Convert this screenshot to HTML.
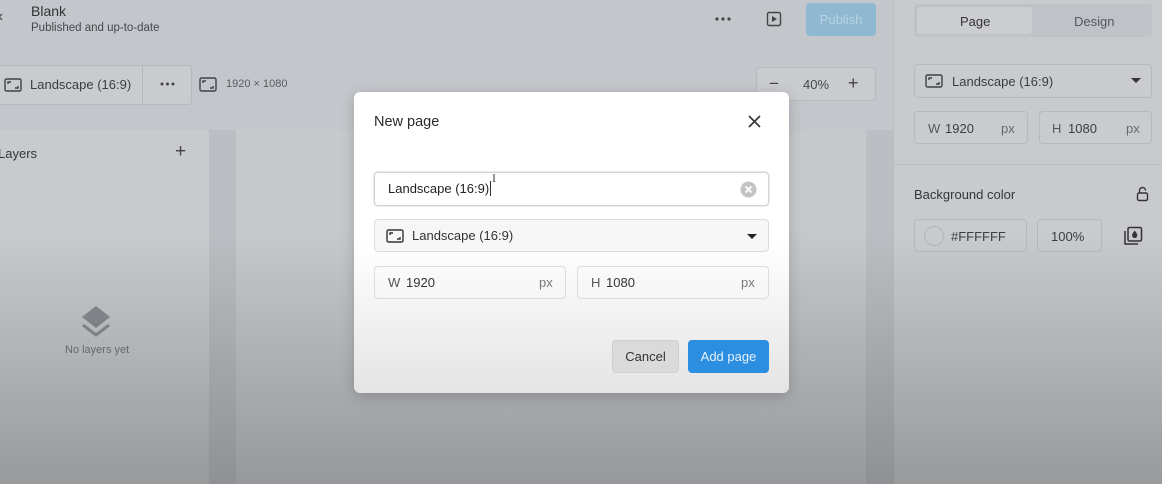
<!DOCTYPE html>
<html><head><meta charset="utf-8"><style>
*{box-sizing:border-box;margin:0;padding:0}
body{width:1162px;height:484px;overflow:hidden;position:relative;background:#c3c6ca;font-family:"Liberation Sans",sans-serif;color:#2e3033}
.a{position:absolute}
.t{font-size:13px;color:#3a3d41}
.box{position:absolute;border:1px solid #b6b9bd;border-radius:4px;background:#c9cbcf}
.shade{position:absolute;left:0;top:0;width:1162px;height:484px;background:linear-gradient(to bottom,rgba(0,0,0,0) 0,rgba(0,0,0,0) 230px,rgba(0,0,0,0.24) 484px);pointer-events:none}
.modal{position:absolute;left:354px;top:92px;width:435px;height:301px;border-radius:6px;background:linear-gradient(to bottom,#fff 0,#fff 150px,#e4e4e4 301px);box-shadow:0 3px 14px rgba(0,0,0,.18)}
.in{position:absolute;border:1px solid #dcdcdc;border-radius:4px;background:#f6f6f6;font-size:13px;color:#333}
</style></head><body>
<div class="a" style="left:0;top:130px;width:209px;height:354px;background:#c8cacd;border-radius:0 4px 0 0"></div>
<div class="a" style="left:209px;top:130px;width:27px;height:354px;background:#bbbec2"></div>
<div class="a" style="left:236px;top:130px;width:630px;height:354px;background:#c6c8cc;border-radius:4px 4px 0 0"></div>
<div class="a" style="left:866px;top:130px;width:27px;height:354px;background:#bbbec2"></div>
<div class="a" style="left:893px;top:0;width:269px;height:484px;background:#c8cacd;border-left:1px solid #b9bcc0"></div>
<div class="a" style="left:893px;top:164px;width:269px;height:1px;background:#b9bcc0"></div>

<div class="a" style="left:-2px;top:8px;font-size:16px;color:#444">‹</div>
<div class="a" style="left:31px;top:3px;font-size:14px;color:#333">Blank</div>
<div class="a" style="left:31px;top:22px;font-size:11.5px;color:#45484c">Published and up-to-date</div>
<svg class="a" style="left:715px;top:17px" width="16" height="4" viewBox="0 0 16 4"><circle cx="2" cy="2" r="1.6" fill="#444"/><circle cx="8" cy="2" r="1.6" fill="#444"/><circle cx="14" cy="2" r="1.6" fill="#444"/></svg>
<svg class="a" style="left:766px;top:11px" width="16" height="16" viewBox="0 0 16 16"><rect x="1.5" y="1.5" width="13" height="13" rx="1.5" fill="none" stroke="#444" stroke-width="1.4"/><path d="M6 5l5 3-5 3z" fill="#444"/></svg>
<div class="a" style="left:806px;top:3px;width:70px;height:33px;border-radius:4px;background:#8fb8d1;color:#b9d3e3;font-size:13px;text-align:center;line-height:33px">Publish</div>

<div class="box" style="left:-4px;top:65px;width:196px;height:40px"></div>
<div class="a" style="left:142px;top:65px;width:1px;height:40px;background:#b6b9bd"></div>
<svg class="a" style="left:4px;top:78px" width="18" height="14" viewBox="0 0 18 14"><rect x="1" y="1" width="16" height="12" rx="1.5" fill="none" stroke="#3f4246" stroke-width="1.4"/><path d="M4 6V4h3M14 8v2h-3" fill="none" stroke="#3f4246" stroke-width="1.4"/></svg>
<div class="a t" style="left:30px;top:77px">Landscape (16:9)</div>
<svg class="a" style="left:160px;top:82px" width="15" height="4" viewBox="0 0 15 4"><circle cx="2" cy="2" r="1.5" fill="#444"/><circle cx="7.5" cy="2" r="1.5" fill="#444"/><circle cx="13" cy="2" r="1.5" fill="#444"/></svg>
<svg class="a" style="left:199px;top:77px" width="18" height="15" viewBox="0 0 18 15"><rect x="1" y="1" width="16" height="13" rx="1.5" fill="none" stroke="#3f4246" stroke-width="1.4"/><path d="M4 6V4h3M14 9v2h-3" fill="none" stroke="#3f4246" stroke-width="1.4"/></svg>
<div class="a" style="left:226px;top:78px;font-size:11px;color:#595c60">1920 × 1080</div>
<div class="box" style="left:756px;top:67px;width:120px;height:34px"></div>
<div class="a" style="left:769px;top:74px;font-size:17px;color:#444">−</div>
<div class="a t" style="left:803px;top:77px;color:#45484c">40%</div>
<div class="a" style="left:848px;top:73px;font-size:18px;color:#444">+</div>

<div class="a t" style="left:-2px;top:146px;color:#33363a">Layers</div>
<div class="a" style="left:175px;top:141px;font-size:19px;color:#444">+</div>
<svg class="a" style="left:80px;top:304px" width="32" height="34" viewBox="0 0 32 34"><path d="M16 2L30 13 16 24 2 13z" fill="#8a8d93"/><path d="M3 21l13 10 13-10" fill="none" stroke="#8a8d93" stroke-width="3"/></svg>
<div class="a" style="left:65px;top:344px;font-size:11px;color:#71747a">No layers yet</div>

<div class="box" style="left:914px;top:4px;width:238px;height:33px;background:#bfc2c6;border-color:#bfc2c6"></div>
<div class="a" style="left:916px;top:6px;width:117px;height:29px;border-radius:4px;background:#cbcdd1;border:1px solid #bcbfc3"></div>
<div class="a t" style="left:960px;top:14px;color:#333">Page</div>
<div class="a t" style="left:1074px;top:14px;color:#55585c">Design</div>
<div class="box" style="left:914px;top:64px;width:238px;height:34px"></div>
<svg class="a" style="left:925px;top:74px" width="18" height="14" viewBox="0 0 18 14"><rect x="1" y="1" width="16" height="12" rx="1.5" fill="none" stroke="#3f4246" stroke-width="1.4"/><path d="M4 6V4h3M14 8v2h-3" fill="none" stroke="#3f4246" stroke-width="1.4"/></svg>
<div class="a t" style="left:952px;top:74px">Landscape (16:9)</div>
<div class="a" style="left:1131px;top:78px;border-left:5px solid transparent;border-right:5px solid transparent;border-top:5px solid #333"></div>
<div class="box" style="left:914px;top:111px;width:114px;height:33px"></div>
<div class="a t" style="left:928px;top:121px;color:#55585c">W</div><div class="a t" style="left:945px;top:121px">1920</div><div class="a t" style="left:1001px;top:121px;color:#66696d">px</div>
<div class="box" style="left:1039px;top:111px;width:113px;height:33px"></div>
<div class="a t" style="left:1052px;top:121px;color:#55585c">H</div><div class="a t" style="left:1068px;top:121px">1080</div><div class="a t" style="left:1126px;top:121px;color:#66696d">px</div>
<div class="a t" style="left:914px;top:187px;color:#33363a">Background color</div>
<svg class="a" style="left:1136px;top:186px" width="13" height="16" viewBox="0 0 13 16"><path d="M3.5 7V4.5a3 3 0 0 1 6 0" fill="none" stroke="#333" stroke-width="1.4"/><rect x="1.5" y="7" width="10" height="7.5" rx="1.5" fill="none" stroke="#333" stroke-width="1.4"/></svg>
<div class="box" style="left:914px;top:219px;width:113px;height:33px"></div>
<div class="a" style="left:924px;top:226px;width:20px;height:20px;border-radius:50%;border:1px solid #b1b4b8"></div>
<div class="a t" style="left:951px;top:229px">#FFFFFF</div>
<div class="box" style="left:1037px;top:219px;width:65px;height:33px"></div>
<div class="a t" style="left:1051px;top:229px">100%</div>
<svg class="a" style="left:1123px;top:226px" width="20" height="20" viewBox="0 0 20 20"><rect x="5" y="1.5" width="13.5" height="13.5" rx="1.5" fill="none" stroke="#333" stroke-width="1.5"/><path d="M2 5v13h13" fill="none" stroke="#333" stroke-width="1.5"/><path d="M11.7 4.5c1.8 2.4 2.6 3.6 2.6 4.9a2.6 2.6 0 0 1-5.2 0c0-1.3.8-2.5 2.6-4.9z" fill="#333"/></svg>

<div class="shade"></div>

<div class="modal">
  <div class="a" style="left:20px;top:22px;font-size:14.5px;color:#2a2c2f">New page</div>
  <svg class="a" style="left:393px;top:22px" width="15" height="15" viewBox="0 0 15 15"><path d="M2 2l11 11M13 2L2 13" stroke="#333" stroke-width="1.6"/></svg>
  <div class="in" style="left:20px;top:80px;width:395px;height:34px;background:#fff;border:1.5px solid #d4d4d4;box-shadow:0 0 0 1px #ececec"></div>
  <div class="a" style="left:34px;top:89px;font-size:13px;color:#222">Landscape (16:9)<span style="border-left:1px solid #333;margin-left:1px"></span></div>
  <div class="a" style="left:138px;top:79px;font-size:12px;color:#444;font-family:'Liberation Serif',serif">I</div>
  <svg class="a" style="left:386px;top:89px" width="17" height="17" viewBox="0 0 17 17"><circle cx="8.5" cy="8.5" r="8" fill="#c4c4c4"/><path d="M5.5 5.5l6 6M11.5 5.5l-6 6" stroke="#fff" stroke-width="1.8"/></svg>
  <div class="in" style="left:20px;top:127px;width:395px;height:33px"></div>
  <svg class="a" style="left:32px;top:137px" width="18" height="14" viewBox="0 0 18 14"><rect x="1" y="1" width="16" height="12" rx="1.5" fill="none" stroke="#333" stroke-width="1.4"/><path d="M4 6V4h3M14 8v2h-3" fill="none" stroke="#333" stroke-width="1.4"/></svg>
  <div class="a" style="left:58px;top:136px;font-size:13px;color:#333">Landscape (16:9)</div>
  <div class="a" style="left:393px;top:142px;border-left:5px solid transparent;border-right:5px solid transparent;border-top:5px solid #222"></div>
  <div class="in" style="left:20px;top:174px;width:192px;height:33px;background:transparent"></div>
  <div class="a t" style="left:34px;top:183px;color:#555">W</div><div class="a t" style="left:52px;top:183px;color:#333">1920</div><div class="a t" style="left:185px;top:183px;color:#777">px</div>
  <div class="in" style="left:223px;top:174px;width:192px;height:33px;background:transparent"></div>
  <div class="a t" style="left:237px;top:183px;color:#555">H</div><div class="a t" style="left:252px;top:183px;color:#333">1080</div><div class="a t" style="left:387px;top:183px;color:#777">px</div>
  <div class="a" style="left:258px;top:248px;width:67px;height:33px;border-radius:4px;background:#dadada;border:1px solid #cfcfcf;font-size:13px;color:#333;text-align:center;line-height:31px">Cancel</div>
  <div class="a" style="left:334px;top:248px;width:81px;height:33px;border-radius:4px;background:#2b8ee0;font-size:13px;color:#e6f1fb;text-align:center;line-height:33px">Add page</div>
</div>
</body></html>
